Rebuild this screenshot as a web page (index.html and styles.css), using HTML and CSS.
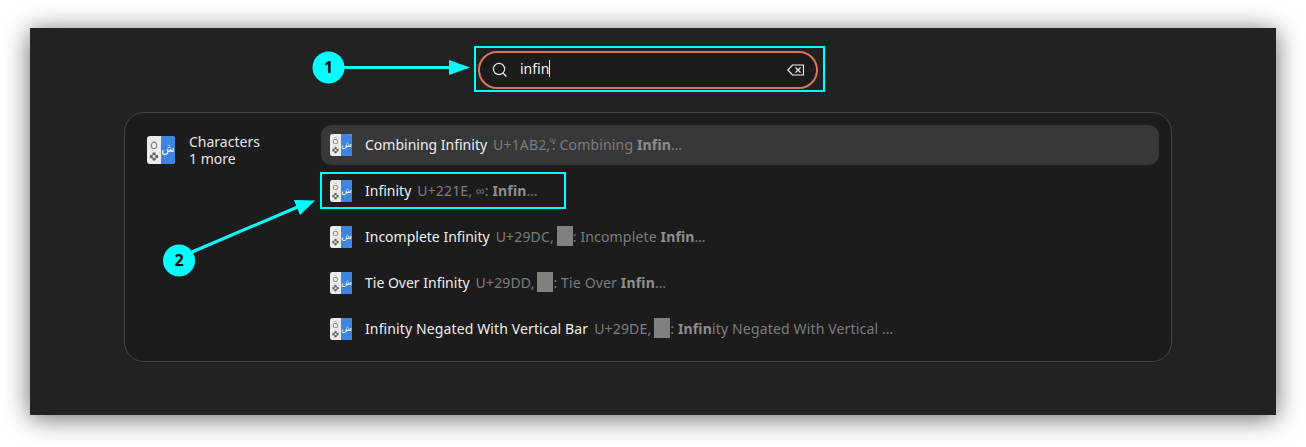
FILE: index.html
```html
<!DOCTYPE html>
<html lang="en">
<head>
<meta charset="utf-8">
<title>Character search</title>
<link rel="stylesheet" href="styles.css">
</head>
<body>
<main class="window">
  <div class="search">
    <svg class="search-icon" width="16" height="16" viewBox="0 0 16 16"><circle cx="7" cy="7" r="5.6" fill="none" stroke="#e4e4e4" stroke-width="1.2"/><path d="M11 11l3.4 3.4" stroke="#e4e4e4" stroke-width="1.4"/></svg>
    <span class="query">infin</span><span class="caret"></span>
    <svg class="clear-icon" width="17" height="12" viewBox="0 0 17 12"><path d="M5.500 1h11v10h-11L.8 6z" fill="none" stroke="#f0f0f0" stroke-width="1.200"/><path d="M8.500 3.500l5 5M13.500 3.500l-5 5" stroke="#f0f0f0" stroke-width="1.200"/></svg>
  </div>

  <section class="panel">
    <div class="provider">
      <svg class="icon-large" viewBox="0 0 28 28"><rect width="28" height="28" rx="3" fill="#ececea"/><path d="M14 0h11a3 3 0 0 1 3 3v22a3 3 0 0 1-3 3H14z" fill="#3d85e0"/><text x="7" y="12.500" class="i-o">Ö</text><path d="M7 16.200a1.800 1.800 0 0 1 1.200 3.100h-2.400A1.800 1.800 0 0 1 7 16.200zM7 24.800a1.800 1.800 0 0 1-1.200-3.100h2.400A1.800 1.800 0 0 1 7 24.800zM2.700 20.500a1.800 1.800 0 0 1 3.100-1.200v2.400a1.800 1.800 0 0 1-3.100-1.200zM11.300 20.500a1.800 1.800 0 0 1-3.100 1.200v-2.400a1.800 1.800 0 0 1 3.100 1.200z" fill="#6a6864"/><text x="21" y="16" class="i-a">ش</text></svg>
      <div class="provider-text"><div>Characters</div><div>1 more</div></div>
    </div>
    <div class="results">
      <div class="row active">
        <svg class="icon" viewBox="0 0 28 28"><rect width="28" height="28" rx="3" fill="#ececea"/><path d="M14 0h11a3 3 0 0 1 3 3v22a3 3 0 0 1-3 3H14z" fill="#3d85e0"/><text x="7" y="12.500" class="i-o">Ö</text><path d="M7 16.200a1.800 1.800 0 0 1 1.200 3.100h-2.400A1.800 1.800 0 0 1 7 16.200zM7 24.800a1.800 1.800 0 0 1-1.200-3.100h2.400A1.800 1.800 0 0 1 7 24.800zM2.700 20.500a1.800 1.800 0 0 1 3.100-1.200v2.400a1.800 1.800 0 0 1-3.100-1.200zM11.300 20.500a1.800 1.800 0 0 1-3.100 1.200v-2.400a1.800 1.800 0 0 1 3.100 1.200z" fill="#6a6864"/><text x="21" y="16" class="i-a">ش</text></svg>
        <span class="title">Combining Infinity</span>
        <span class="desc">U+1AB2,<span class="combining">∞</span>: Combining <b>Infin</b>…</span>
      </div>
      <div class="row">
        <svg class="icon" viewBox="0 0 28 28"><rect width="28" height="28" rx="3" fill="#ececea"/><path d="M14 0h11a3 3 0 0 1 3 3v22a3 3 0 0 1-3 3H14z" fill="#3d85e0"/><text x="7" y="12.500" class="i-o">Ö</text><path d="M7 16.200a1.800 1.800 0 0 1 1.200 3.100h-2.400A1.800 1.800 0 0 1 7 16.200zM7 24.800a1.800 1.800 0 0 1-1.200-3.100h2.400A1.800 1.800 0 0 1 7 24.800zM2.700 20.500a1.800 1.800 0 0 1 3.100-1.200v2.400a1.800 1.800 0 0 1-3.100-1.200zM11.300 20.500a1.800 1.800 0 0 1-3.100 1.200v-2.400a1.800 1.800 0 0 1 3.100 1.200z" fill="#6a6864"/><text x="21" y="16" class="i-a">ش</text></svg>
        <span class="title">Infinity</span>
        <span class="desc">U+221E, <span class="inf">∞</span>: <b>Infin</b>…</span>
      </div>
      <div class="row">
        <svg class="icon" viewBox="0 0 28 28"><rect width="28" height="28" rx="3" fill="#ececea"/><path d="M14 0h11a3 3 0 0 1 3 3v22a3 3 0 0 1-3 3H14z" fill="#3d85e0"/><text x="7" y="12.500" class="i-o">Ö</text><path d="M7 16.200a1.800 1.800 0 0 1 1.200 3.100h-2.400A1.800 1.800 0 0 1 7 16.200zM7 24.800a1.800 1.800 0 0 1-1.200-3.100h2.400A1.800 1.800 0 0 1 7 24.800zM2.700 20.500a1.800 1.800 0 0 1 3.100-1.200v2.400a1.800 1.800 0 0 1-3.100-1.200zM11.300 20.500a1.800 1.800 0 0 1-3.100 1.200v-2.400a1.800 1.800 0 0 1 3.100 1.200z" fill="#6a6864"/><text x="21" y="16" class="i-a">ش</text></svg>
        <span class="title">Incomplete Infinity</span>
        <span class="desc">U+29DC, <span class="tofu"></span>: Incomplete <b>Infin</b>…</span>
      </div>
      <div class="row">
        <svg class="icon" viewBox="0 0 28 28"><rect width="28" height="28" rx="3" fill="#ececea"/><path d="M14 0h11a3 3 0 0 1 3 3v22a3 3 0 0 1-3 3H14z" fill="#3d85e0"/><text x="7" y="12.500" class="i-o">Ö</text><path d="M7 16.200a1.800 1.800 0 0 1 1.200 3.100h-2.400A1.800 1.800 0 0 1 7 16.200zM7 24.800a1.800 1.800 0 0 1-1.200-3.100h2.400A1.800 1.800 0 0 1 7 24.800zM2.700 20.500a1.800 1.800 0 0 1 3.100-1.200v2.400a1.800 1.800 0 0 1-3.100-1.200zM11.300 20.500a1.800 1.800 0 0 1-3.100 1.200v-2.400a1.800 1.800 0 0 1 3.100 1.200z" fill="#6a6864"/><text x="21" y="16" class="i-a">ش</text></svg>
        <span class="title">Tie Over Infinity</span>
        <span class="desc">U+29DD, <span class="tofu"></span>: Tie Over <b>Infin</b>…</span>
      </div>
      <div class="row">
        <svg class="icon" viewBox="0 0 28 28"><rect width="28" height="28" rx="3" fill="#ececea"/><path d="M14 0h11a3 3 0 0 1 3 3v22a3 3 0 0 1-3 3H14z" fill="#3d85e0"/><text x="7" y="12.500" class="i-o">Ö</text><path d="M7 16.200a1.800 1.800 0 0 1 1.200 3.100h-2.400A1.800 1.800 0 0 1 7 16.200zM7 24.800a1.800 1.800 0 0 1-1.200-3.100h2.400A1.800 1.800 0 0 1 7 24.800zM2.700 20.500a1.800 1.800 0 0 1 3.100-1.200v2.400a1.800 1.800 0 0 1-3.100-1.200zM11.300 20.500a1.800 1.800 0 0 1-3.100 1.200v-2.400a1.800 1.800 0 0 1 3.100 1.200z" fill="#6a6864"/><text x="21" y="16" class="i-a">ش</text></svg>
        <span class="title title-wide">Infinity Negated With Vertical Bar</span>
        <span class="desc">U+29DE, <span class="tofu"></span>: <b>Infin</b>ity Negated With Vertical …</span>
      </div>
    </div>
  </section>
</main>

<svg class="annotations" width="1306" height="447" viewBox="0 0 1306 447">
  <rect x="475" y="47" width="349" height="44" class="hl"/>
  <rect x="321" y="173" width="244" height="35" class="hl"/>
  <path d="M340 67.500H452" class="arrow-line"/>
  <path d="M470 67.500L449 60V75z" class="arrow-head"/>
  <circle cx="328.500" cy="67.500" r="16" class="badge"/>
  <text x="328.500" y="73" class="badge-text">1</text>
  <path d="M192 252L300 206" class="arrow-line"/>
  <path d="M315 200.500L294 200L300 215z" class="arrow-head"/>
  <circle cx="179" cy="260.500" r="16" class="badge"/>
  <text x="179" y="266" class="badge-text">2</text>
</svg>
</body>
</html>
```
FILE: styles.css
```css
* { box-sizing: border-box; }
html, body { margin: 0; height: 447px; overflow: hidden; background: #fff; }
body { padding: 28px 30px 32px; font-family: "Noto Sans", "Liberation Sans", sans-serif; font-size: 14px; position: relative; }

.window {
  height: 387px;
  background: #222222;
  box-shadow: 0 3px 24px rgba(0, 0, 0, 0.6);
  padding: 23px 104px 0 94px;
  display: flex;
  flex-direction: column;
  align-items: center;
}

.search {
  width: 340px;
  height: 38px;
  border: 2px solid #d9795a;
  border-radius: 19px;
  background: #1c1c1c;
  display: flex;
  align-items: center;
  padding: 0 12px 3px 12px;
  color: #f0f0f0;
}
.search-icon { margin-top: 2px; }
.query { margin-left: 12px; font-size: 14px; }
.caret { width: 1px; height: 17px; background: #f0f0f0; }
.clear-icon { margin-left: auto; margin-top: 2px; }

.panel {
  width: 1048px;
  height: 250px;
  margin-top: 23px;
  border: 1px solid #444444;
  border-radius: 20px;
  background: #1c1c1c;
  display: flex;
  padding: 12px 12px 0 22px;
}

.provider { width: 174px; display: flex; gap: 14px; padding-top: 11px; color: #e6e6e6; }
.icon-large { width: 28px; height: 28px; flex: none; }
.provider-text { line-height: 17px; margin-top: -3px; }

.results { flex: 1; display: flex; flex-direction: column; gap: 6px; }
.row { height: 40px; display: flex; align-items: center; padding: 0 0 2px 9px; border-radius: 10px; white-space: nowrap; }
.row.active { background: #383838; }
.icon { width: 22px; height: 22px; flex: none; margin: 2px 13px 0 0; }
.title { color: #eeeeee; margin-right: 6px; }
.title-wide { letter-spacing: 0.12px; }
.desc { color: #7c7c7c; display: inline-flex; align-items: center; white-space: pre; letter-spacing: 0.16px; }
.desc b { color: #8e8e8e; font-weight: 700; }
.tofu { display: inline-block; width: 16px; height: 20px; background: #808080; margin-left: -1px; }
.inf { font-size: 12px; }
.combining { font-size: 9px; margin-left: -1px; margin-right: -4px; align-self: flex-start; line-height: 10px; }

.annotations { position: absolute; left: 0; top: 0; pointer-events: none; }
.hl { fill: none; stroke: #00ffff; stroke-width: 2; }
.arrow-line { stroke: #00ffff; stroke-width: 3; fill: none; }
.arrow-head, .badge { fill: #00ffff; }
.badge-text { font: 700 16px "Noto Sans", sans-serif; fill: #000; text-anchor: middle; }
.i-o { font: 400 9.500px "Noto Sans", sans-serif; fill: #6a6864; text-anchor: middle; }
.i-a { font: 400 11px "DejaVu Sans", sans-serif; fill: #fff; text-anchor: middle; }
```
